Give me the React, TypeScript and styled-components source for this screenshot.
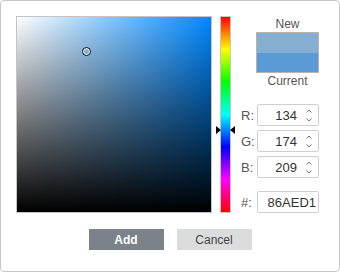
import React, { useState } from "react";
import styled, { createGlobalStyle } from "styled-components";

const GlobalStyle = createGlobalStyle`
  body {
    margin: 0;
    background: #ffffff;
    font-family: "Liberation Sans", Arial, sans-serif;
  }
`;

const Panel = styled.div`
  width: 340px;
  height: 272px;
  box-sizing: border-box;
  border: 1px solid #c8c8c8;
  border-radius: 4px;
  padding: 15px;
  background: #fff;
`;

const PickerRow = styled.div`
  display: flex;
  align-items: flex-start;
`;

const Square = styled.div<{ $hue: number }>`
  position: relative;
  width: 196px;
  height: 197px;
  box-sizing: border-box;
  border: 1px solid #c4c4c4;
  background: linear-gradient(to top, #000, rgba(0, 0, 0, 0)),
    linear-gradient(to right, #fff, hsl(${(p) => p.$hue}, 100%, 50%));
`;

const Marker = styled.div`
  position: absolute;
  width: 9px;
  height: 9px;
  margin: -5px 0 0 -5px;
  box-sizing: border-box;
  border-radius: 50%;
  border: 1px solid #111;
  box-shadow: inset 0 0 0 1px #fff;
`;

const HueBar = styled.div`
  position: relative;
  margin-left: 8px;
  width: 11px;
  height: 197px;
  box-sizing: border-box;
  border: 1px solid #c4c4c4;
  background: linear-gradient(
    to bottom,
    #ff0000,
    #ffff00,
    #00ff00,
    #00ffff,
    #0000ff,
    #ff00ff,
    #ff0000
  );
`;

const HueArrows = styled.div`
  position: absolute;
  left: -5px;
  right: -5px;
  height: 8px;
  margin-top: -4px;

  &::before,
  &::after {
    content: "";
    position: absolute;
    top: 0;
    border-top: 4px solid transparent;
    border-bottom: 4px solid transparent;
  }
  &::before {
    left: 0;
    border-left: 5px solid #000;
  }
  &::after {
    right: 0;
    border-right: 5px solid #000;
  }
`;

const SideColumn = styled.div`
  display: flex;
  flex-direction: column;
  margin-left: 10px;
  width: 80px;
`;

const Preview = styled.div`
  display: flex;
  flex-direction: column;
  align-items: center;
  margin-left: 15px;
  width: 63px;
`;

const PreviewLabel = styled.div`
  font-size: 12px;
  line-height: 16px;
  color: #555;
`;

const Swatch = styled.div`
  width: 63px;
  height: 41px;
  box-sizing: border-box;
  border: 1px solid #b4b4b4;
  display: flex;
  flex-direction: column;
`;

const SwatchHalf = styled.div<{ $color: string }>`
  flex: 1;
  background: ${(p) => p.$color};
`;

const Fields = styled.div`
  display: flex;
  flex-direction: column;
  gap: 4px;
  margin-top: 15px;
`;

const FieldRow = styled.div<{ $gapTop?: number }>`
  display: flex;
  align-items: center;
  margin-top: ${(p) => p.$gapTop ?? 0}px;
`;

const FieldLabel = styled.div`
  width: 16px;
  font-size: 13px;
  color: #555;
`;

const Field = styled.div`
  position: relative;
  display: flex;
  align-items: center;
  justify-content: flex-end;
  width: 62px;
  height: 22px;
  box-sizing: border-box;
  border: 1px solid #cfcfcf;
  border-radius: 2px;
  padding-right: 2px;
  font-size: 13px;
  color: #333;
`;

const Spinner = styled.div`
  display: flex;
  flex-direction: column;
  justify-content: space-between;
  height: 13px;
  margin-left: 9px;
  margin-right: 4px;
`;

const Footer = styled.div`
  display: flex;
  justify-content: center;
  gap: 13px;
  margin-top: 16px;
`;

const Button = styled.button<{ $primary?: boolean }>`
  width: 75px;
  height: 21px;
  border: none;
  padding: 0;
  font-family: "Liberation Sans", Arial, sans-serif;
  font-size: 12px;
  font-weight: ${(p) => (p.$primary ? "bold" : "normal")};
  color: ${(p) => (p.$primary ? "#fff" : "#444")};
  background: ${(p) => (p.$primary ? "#7b8289" : "#dbdcdd")};
`;

const Chevron = ({ up }: { up?: boolean }) => (
  <svg width="6" height="4" viewBox="0 0 6 4">
    <path
      d={up ? "M0.5 3.5 L3 1 L5.5 3.5" : "M0.5 0.5 L3 3 L5.5 0.5"}
      fill="none"
      stroke="#777"
      strokeWidth="1"
    />
  </svg>
);

function toHsv(r: number, g: number, b: number) {
  const max = Math.max(r, g, b);
  const min = Math.min(r, g, b);
  const d = max - min;
  let h = 0;
  if (d) {
    if (max === r) h = ((g - b) / d) % 6;
    else if (max === g) h = (b - r) / d + 2;
    else h = (r - g) / d + 4;
    h *= 60;
    if (h < 0) h += 360;
  }
  return { h, s: max ? d / max : 0, v: max / 255 };
}

export default function App() {
  const [rgb] = useState({ r: 134, g: 174, b: 209 });
  const hsv = toHsv(rgb.r, rgb.g, rgb.b);
  const hex = [rgb.r, rgb.g, rgb.b]
    .map((n) => n.toString(16).padStart(2, "0"))
    .join("")
    .toUpperCase();

  const channels: [string, number][] = [
    ["R:", rgb.r],
    ["G:", rgb.g],
    ["B:", rgb.b],
  ];

  return (
    <>
      <GlobalStyle />
      <Panel>
        <PickerRow>
          <Square $hue={hsv.h}>
            <Marker style={{ left: hsv.s * 194, top: (1 - hsv.v) * 195 }} />
          </Square>
          <HueBar>
            <HueArrows style={{ top: (hsv.h / 360) * 195 }} />
          </HueBar>
          <SideColumn>
            <Preview>
              <PreviewLabel>New</PreviewLabel>
              <Swatch>
                <SwatchHalf $color={`#${hex}`} />
                <SwatchHalf $color="#5b9bd5" />
              </Swatch>
              <PreviewLabel>Current</PreviewLabel>
            </Preview>
            <Fields>
              {channels.map(([label, value]) => (
                <FieldRow key={label}>
                  <FieldLabel>{label}</FieldLabel>
                  <Field>
                    {value}
                    <Spinner>
                      <Chevron up />
                      <Chevron />
                    </Spinner>
                  </Field>
                </FieldRow>
              ))}
            </Fields>
            <FieldRow $gapTop={13}>
              <FieldLabel>#:</FieldLabel>
              <Field>{hex}</Field>
            </FieldRow>
          </SideColumn>
        </PickerRow>
        <Footer>
          <Button $primary>Add</Button>
          <Button>Cancel</Button>
        </Footer>
      </Panel>
    </>
  );
}
